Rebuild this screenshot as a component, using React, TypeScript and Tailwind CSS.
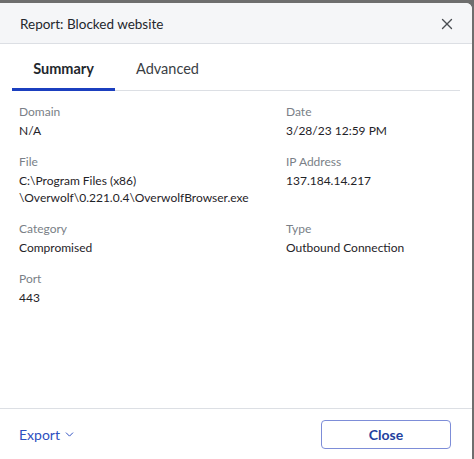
import { X, ChevronDown } from 'lucide-react'

const rows = [
  [
    { label: 'Domain', value: ['N/A'] },
    { label: 'Date', value: ['3/28/23 12:59 PM'] },
  ],
  [
    { label: 'File', value: ['C:\\Program Files (x86)', '\\Overwolf\\0.221.0.4\\OverwolfBrowser.exe'] },
    { label: 'IP Address', value: ['137.184.14.217'] },
  ],
  [
    { label: 'Category', value: ['Compromised'] },
    { label: 'Type', value: ['Outbound Connection'] },
  ],
  [{ label: 'Port', value: ['443'] }],
]

function Field({ label, value }: { label: string; value: string[] }) {
  return (
    <div className="flex flex-col">
      <span className="text-[12px] leading-[17px] text-[#7a7f87]">{label}</span>
      <div className="mt-[2px] text-[12px] leading-[17px] text-[#1f2328]">
        {value.map((v) => (
          <div key={v}>{v}</div>
        ))}
      </div>
    </div>
  )
}

export default function App() {
  return (
    <div
      className="h-[459px] w-[474px] bg-[#6e6e6e] pt-[3px] pr-[2px]"
      style={{ fontFamily: 'Lato, "Noto Sans", sans-serif' }}
    >
      <div className="flex h-full flex-col overflow-hidden rounded-tr-[6px] bg-white">
        {/* Header */}
        <div className="flex h-[41px] items-center justify-between border-b border-[#dcdfe4] bg-[#f5f6f8] pl-[20px] pr-[16px] pt-[2px]">
          <span className="text-[13.5px] text-[#23272d]">Report: Blocked website</span>
          <X size={18} strokeWidth={1.8} className="text-[#4a4d52]" />
        </div>

        {/* Tabs */}
        <div className="mx-[12px] mt-[10px] flex border-b border-[#dcdfe4]">
          <div className="-mb-px w-[103px] border-b-[3px] border-[#1b3fbf] pb-[8px] pt-[4px] text-center text-[14.5px] font-bold text-[#23272d]">
            Summary
          </div>
          <div className="px-[21px] pb-[8px] pt-[4px] text-[14.5px] text-[#3a3e44]">Advanced</div>
        </div>

        {/* Body */}
        <div className="grid flex-1 grid-cols-[267px_1fr] content-start gap-y-[14px] px-[19px] pt-[12px]">
          {rows.map((row) =>
            row.map((f) => <Field key={f.label} {...f} />)
          )}
        </div>

        {/* Footer */}
        <div className="flex h-[51px] items-center justify-between border-t border-[#dcdfe4] pl-[19px] pr-[21px]">
          <button className="flex items-center gap-[3px] text-[14px] text-[#2d4fc0]">
            Export
            <ChevronDown size={13} strokeWidth={1.8} />
          </button>
          <button className="flex h-[29px] w-[130px] items-center justify-center rounded-[4px] border border-[#7d8dd8] text-[14px] font-bold text-[#233f9e]">
            Close
          </button>
        </div>
      </div>
    </div>
  )
}
